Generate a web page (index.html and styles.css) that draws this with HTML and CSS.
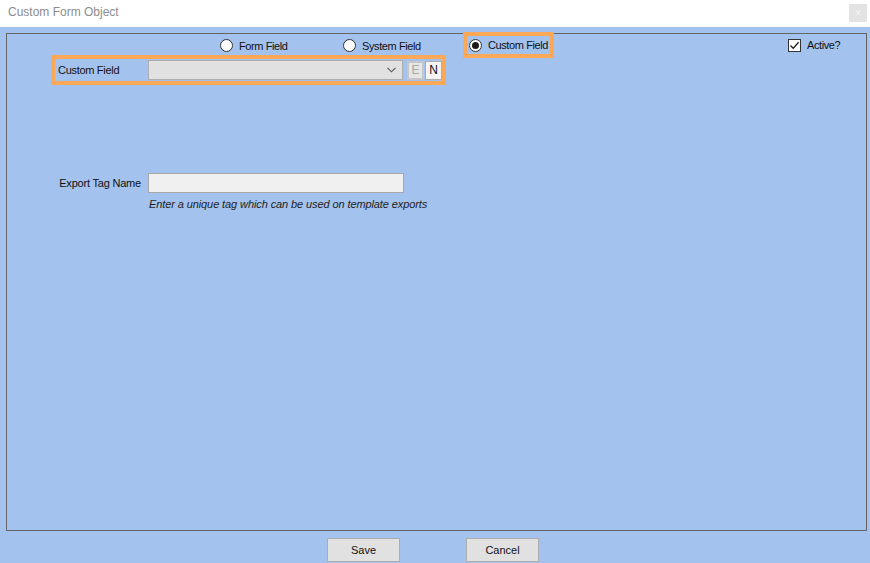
FILE: index.html
```html
<!DOCTYPE html>
<html lang="en">
<head>
    <meta charset="UTF-8">
    <meta name="viewport" content="width=device-width, initial-scale=1.0">
    <title>Custom Form Object</title>
    <link rel="stylesheet" href="styles.css">
</head>
<body>

    <!-- Title Bar -->
    <div class="titlebar">
        <span class="title">Custom Form Object</span>
        <span class="close-btn">&#215;</span>
    </div>

    <!-- Window Body -->
    <div class="window">
        <div class="panel">

            <!-- Field Type Options -->
            <div class="type-row">
                <label class="radio-item form-field"><span class="radio"></span>Form Field</label>
                <label class="radio-item system-field"><span class="radio"></span>System Field</label>
                <label class="radio-item custom-field highlight"><span class="radio checked"></span>Custom Field</label>
                <label class="check-item"><span class="checkbox">
                    <svg width="11" height="11" viewBox="0 0 11 11"><path d="M1.5 5.5 L4.2 8.3 L9.6 2.2" fill="none" stroke="#222" stroke-width="1.3"/></svg>
                </span>Active?</label>
            </div>

            <!-- Custom Field Picker -->
            <div class="field-row highlight">
                <span class="field-label">Custom Field</span>
                <div class="combo">
                    <svg width="9" height="6" viewBox="0 0 9 6"><path d="M0.5 0.8 L4.5 4.8 L8.5 0.8" fill="none" stroke="#555" stroke-width="1.1"/></svg>
                </div>
                <button type="button" class="small-btn disabled">E</button>
                <button type="button" class="small-btn">N</button>
            </div>

            <!-- Export Tag -->
            <div class="export-row">
                <span class="export-label">Export Tag Name</span>
                <input type="text" class="text-input">
            </div>
            <div class="hint">Enter a unique tag which can be used on template exports</div>
        </div>

        <!-- Dialog Buttons -->
        <div class="dialog-buttons">
            <button type="button" class="dialog-btn">Save</button>
            <button type="button" class="dialog-btn">Cancel</button>
        </div>
    </div>

</body>
</html>
```

FILE: styles.css
```css
/* General Styles */
body {
    margin: 0;
    padding: 0;
    font-family: "Liberation Sans", Arial, sans-serif;
    font-size: 11px;
    color: #111;
    background-color: #a4c2ee;
    overflow: hidden;
}

/* Title Bar */
.titlebar {
    height: 27px;
    background-color: #ffffff;
    display: flex;
    justify-content: space-between;
    align-items: flex-start;
}

.title {
    font-size: 12px;
    color: #8c8c8c;
    padding-left: 8px;
    line-height: 24px;
}

.close-btn {
    width: 18px;
    height: 18px;
    margin-top: 4px;
    margin-right: 3px;
    background-color: #e3e3e3;
    color: #f4f4f4;
    font-size: 12px;
    line-height: 18px;
    text-align: center;
}

/* Window */
.window {
    padding: 6px 3px 0 6px;
}

.panel {
    height: 496px;
    border: 1px solid #646464;
}

.highlight {
    border: 4px solid #fba859;
    box-sizing: border-box;
}

/* Type Row */
.type-row {
    display: flex;
    align-items: center;
    height: 26px;
    margin-top: -2px;
}

.radio-item, .check-item {
    display: flex;
    align-items: center;
    white-space: nowrap;
    letter-spacing: -0.4px;
    padding-top: 1px;
}

.radio {
    width: 11px;
    height: 11px;
    border: 1px solid #333;
    border-radius: 50%;
    background-color: #fff;
    margin-right: 6px;
    position: relative;
    flex-shrink: 0;
}

.radio.checked::after {
    content: "";
    position: absolute;
    left: 2px;
    top: 2px;
    width: 7px;
    height: 7px;
    border-radius: 50%;
    background-color: #1a1a1a;
}

.form-field {
    margin-left: 213px;
    width: 123px;
}

.system-field {
    width: 120px;
}

.custom-field {
    width: 91px;
    height: 26px;
    padding-left: 2px;
    padding-top: 0;
    flex-shrink: 0;
}

.check-item {
    margin-left: 234px;
    margin-top: -1px;
}

.checkbox {
    width: 11px;
    height: 11px;
    border: 1px solid #333;
    background-color: #fff;
    margin-right: 6px;
    display: flex;
}

/* Custom Field Row */
.field-row {
    display: flex;
    align-items: center;
    width: 395px;
    height: 30px;
    margin-left: 44px;
    margin-top: -3px;
    padding-left: 3px;
}

.field-label {
    width: 90px;
    letter-spacing: -0.3px;
}

.combo {
    width: 256px;
    height: 20px;
    box-sizing: border-box;
    border: 1px solid #adadad;
    background-color: #e1e1e1;
    display: flex;
    justify-content: flex-end;
    align-items: center;
    padding-right: 6px;
}

.small-btn {
    height: 19px;
    padding: 0;
    font-family: inherit;
    font-size: 12px;
    box-sizing: border-box;
}

.small-btn.disabled {
    width: 17px;
    margin-left: 4px;
    border: 2px solid #c6c6c6;
    background-color: #e6e6e6;
    color: #a8a8a8;
}

.small-btn:not(.disabled) {
    width: 17px;
    margin-left: 1px;
    border: 1px solid #adadad;
    background-color: #f4f4f4;
    color: #111;
}

/* Export Tag */
.export-row {
    display: flex;
    align-items: center;
    margin-top: 88px;
}

.export-label {
    width: 141px;
    box-sizing: border-box;
    padding-right: 7px;
    text-align: right;
    letter-spacing: -0.2px;
}

.text-input {
    width: 256px;
    height: 20px;
    box-sizing: border-box;
    border: 1px solid #a8a8a8;
    background-color: #f0f0f0;
    margin: 0;
}

.hint {
    margin-left: 142px;
    margin-top: 5px;
    font-style: italic;
    font-size: 11px;
    letter-spacing: -0.1px;
    color: #222;
}

/* Dialog Buttons */
.dialog-buttons {
    display: flex;
    margin-top: 7px;
    padding-left: 321px;
}

.dialog-btn {
    width: 73px;
    height: 24px;
    font-family: inherit;
    font-size: 11px;
    color: #111;
    background-color: #e1e1e1;
    border: 1px solid #adadad;
    padding: 0;
}

.dialog-btn + .dialog-btn {
    margin-left: 66px;
}
```
